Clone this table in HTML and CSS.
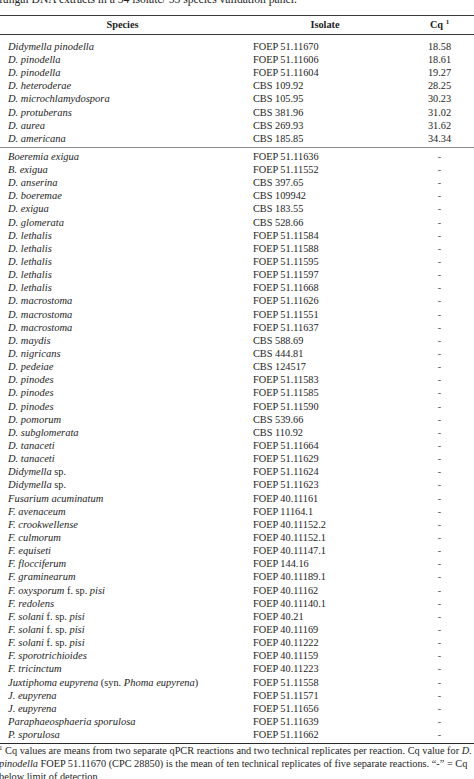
FILE: index.html
```html
<!DOCTYPE html>
<html lang="en">
<head>
<meta charset="utf-8">
<title>Validation panel</title>
<link rel="stylesheet" href="styles.css">
</head>
<body>
<div class="page">
  <p class="caption">fungal DNA extracts in a 54 isolate/ 53 species validation panel.</p>
  <table class="data">
    <colgroup><col class="c-sp"><col class="c-iso"><col class="c-cq"></colgroup>
    <thead>
      <tr><th>Species</th><th>Isolate</th><th>Cq <sup>1</sup></th></tr>
    </thead>
    <tbody class="pos">
      <tr><td><i>Didymella pinodella</i></td><td>FOEP 51.11670</td><td>18.58</td></tr>
      <tr><td><i>D. pinodella</i></td><td>FOEP 51.11606</td><td>18.61</td></tr>
      <tr><td><i>D. pinodella</i></td><td>FOEP 51.11604</td><td>19.27</td></tr>
      <tr><td><i>D. heteroderae</i></td><td>CBS 109.92</td><td>28.25</td></tr>
      <tr><td><i>D. microchlamydospora</i></td><td>CBS 105.95</td><td>30.23</td></tr>
      <tr><td><i>D. protuberans</i></td><td>CBS 381.96</td><td>31.02</td></tr>
      <tr><td><i>D. aurea</i></td><td>CBS 269.93</td><td>31.62</td></tr>
      <tr><td><i>D. americana</i></td><td>CBS 185.85</td><td>34.34</td></tr>
    </tbody>
    <tbody class="neg">
      <tr><td><i>Boeremia exigua</i></td><td>FOEP 51.11636</td><td>-</td></tr>
      <tr><td><i>B. exigua</i></td><td>FOEP 51.11552</td><td>-</td></tr>
      <tr><td><i>D. anserina</i></td><td>CBS 397.65</td><td>-</td></tr>
      <tr><td><i>D. boeremae</i></td><td>CBS 109942</td><td>-</td></tr>
      <tr><td><i>D. exigua</i></td><td>CBS 183.55</td><td>-</td></tr>
      <tr><td><i>D. glomerata</i></td><td>CBS 528.66</td><td>-</td></tr>
      <tr><td><i>D. lethalis</i></td><td>FOEP 51.11584</td><td>-</td></tr>
      <tr><td><i>D. lethalis</i></td><td>FOEP 51.11588</td><td>-</td></tr>
      <tr><td><i>D. lethalis</i></td><td>FOEP 51.11595</td><td>-</td></tr>
      <tr><td><i>D. lethalis</i></td><td>FOEP 51.11597</td><td>-</td></tr>
      <tr><td><i>D. lethalis</i></td><td>FOEP 51.11668</td><td>-</td></tr>
      <tr><td><i>D. macrostoma</i></td><td>FOEP 51.11626</td><td>-</td></tr>
      <tr><td><i>D. macrostoma</i></td><td>FOEP 51.11551</td><td>-</td></tr>
      <tr><td><i>D. macrostoma</i></td><td>FOEP 51.11637</td><td>-</td></tr>
      <tr><td><i>D. maydis</i></td><td>CBS 588.69</td><td>-</td></tr>
      <tr><td><i>D. nigricans</i></td><td>CBS 444.81</td><td>-</td></tr>
      <tr><td><i>D. pedeiae</i></td><td>CBS 124517</td><td>-</td></tr>
      <tr><td><i>D. pinodes</i></td><td>FOEP 51.11583</td><td>-</td></tr>
      <tr><td><i>D. pinodes</i></td><td>FOEP 51.11585</td><td>-</td></tr>
      <tr><td><i>D. pinodes</i></td><td>FOEP 51.11590</td><td>-</td></tr>
      <tr><td><i>D. pomorum</i></td><td>CBS 539.66</td><td>-</td></tr>
      <tr><td><i>D. subglomerata</i></td><td>CBS 110.92</td><td>-</td></tr>
      <tr><td><i>D. tanaceti</i></td><td>FOEP 51.11664</td><td>-</td></tr>
      <tr><td><i>D. tanaceti</i></td><td>FOEP 51.11629</td><td>-</td></tr>
      <tr><td><i>Didymella</i> sp.</td><td>FOEP 51.11624</td><td>-</td></tr>
      <tr><td><i>Didymella</i> sp.</td><td>FOEP 51.11623</td><td>-</td></tr>
      <tr><td><i>Fusarium acuminatum</i></td><td>FOEP 40.11161</td><td>-</td></tr>
      <tr><td><i>F. avenaceum</i></td><td>FOEP 11164.1</td><td>-</td></tr>
      <tr><td><i>F. crookwellense</i></td><td>FOEP 40.11152.2</td><td>-</td></tr>
      <tr><td><i>F. culmorum</i></td><td>FOEP 40.11152.1</td><td>-</td></tr>
      <tr><td><i>F. equiseti</i></td><td>FOEP 40.11147.1</td><td>-</td></tr>
      <tr><td><i>F. flocciferum</i></td><td>FOEP 144.16</td><td>-</td></tr>
      <tr><td><i>F. graminearum</i></td><td>FOEP 40.11189.1</td><td>-</td></tr>
      <tr><td><i>F. oxysporum</i> f. sp. <i>pisi</i></td><td>FOEP 40.11162</td><td>-</td></tr>
      <tr><td><i>F. redolens</i></td><td>FOEP 40.11140.1</td><td>-</td></tr>
      <tr><td><i>F. solani</i> f. sp. <i>pisi</i></td><td>FOEP 40.21</td><td>-</td></tr>
      <tr><td><i>F. solani</i> f. sp. <i>pisi</i></td><td>FOEP 40.11169</td><td>-</td></tr>
      <tr><td><i>F. solani</i> f. sp. <i>pisi</i></td><td>FOEP 40.11222</td><td>-</td></tr>
      <tr><td><i>F. sporotrichioides</i></td><td>FOEP 40.11159</td><td>-</td></tr>
      <tr><td><i>F. tricinctum</i></td><td>FOEP 40.11223</td><td>-</td></tr>
      <tr><td><i>Juxtiphoma eupyrena</i> (syn. <i>Phoma eupyrena</i>)</td><td>FOEP 51.11558</td><td>-</td></tr>
      <tr><td><i>J. eupyrena</i></td><td>FOEP 51.11571</td><td>-</td></tr>
      <tr><td><i>J. eupyrena</i></td><td>FOEP 51.11656</td><td>-</td></tr>
      <tr><td><i>Paraphaeosphaeria sporulosa</i></td><td>FOEP 51.11639</td><td>-</td></tr>
      <tr><td><i>P. sporulosa</i></td><td>FOEP 51.11662</td><td>-</td></tr>
    </tbody>
  </table>
  <p class="note"><span class="line"><sup>1</sup> Cq values are means from two separate qPCR reactions and two technical replicates per reaction. Cq value for <i>D.</i></span><span class="line"><i>pinodella</i> FOEP 51.11670 (CPC 28850) is the mean of ten technical replicates of five separate reactions. “-” = Cq</span><span class="line">below limit of detection.</span></p>
</div>
</body>
</html>
```

FILE: styles.css
```css
html, body {
  margin: 0;
  padding: 0;
  background: #ffffff;
}

body {
  width: 474px;
  height: 779px;
  overflow: hidden;
}

.page {
  font-family: "Liberation Serif", "Times New Roman", serif;
  font-size: 10.3px;
  color: #1e1e1e;
}

.caption {
  margin: -7px 0 9px -1px;
  font-size: 11.6px;
  line-height: 13px;
  white-space: nowrap;
}

.data {
  width: 474px;
  table-layout: fixed;
  border-collapse: collapse;
  border-spacing: 0;
}

.c-sp { width: 245px; }
.c-iso { width: 160px; }
.c-cq { width: 69px; }

.data th {
  font-weight: bold;
  text-align: center;
  line-height: 17.5px;
  padding: 0;
  border-top: 1.5px solid #3a3a3a;
  border-bottom: 1px solid #3a3a3a;
}

.data th sup {
  font-size: 7px;
  vertical-align: 4px;
  line-height: 0;
}

.data td {
  padding: 0;
  line-height: 13.14px;
  white-space: nowrap;
}

.data td:first-child { padding-left: 8px; }
.data td:nth-child(2) { padding-left: 8px; }
.data td:nth-child(3) { text-align: center; }

.data i { font-size: 10.5px; }

.pos tr:first-child td { padding-top: 5.4px; }
.pos tr:last-child td { padding-bottom: 2px; }

.neg { border-top: 1px solid #8c8c8c; }
.neg tr:first-child td { padding-top: 1.9px; }
.neg tr:last-child td { padding-bottom: 2.2px; }
.neg { border-bottom: 1.5px solid #2a2a2a; }
.neg td:nth-child(3) { color: #555; }

.note {
  margin: 1px 0 0 -1px;
  font-size: 10.3px;
  line-height: 12.6px;
  white-space: nowrap;
}

.note .line { display: block; }

.note sup {
  font-size: 7px;
  vertical-align: 4px;
  line-height: 0;
}
```
